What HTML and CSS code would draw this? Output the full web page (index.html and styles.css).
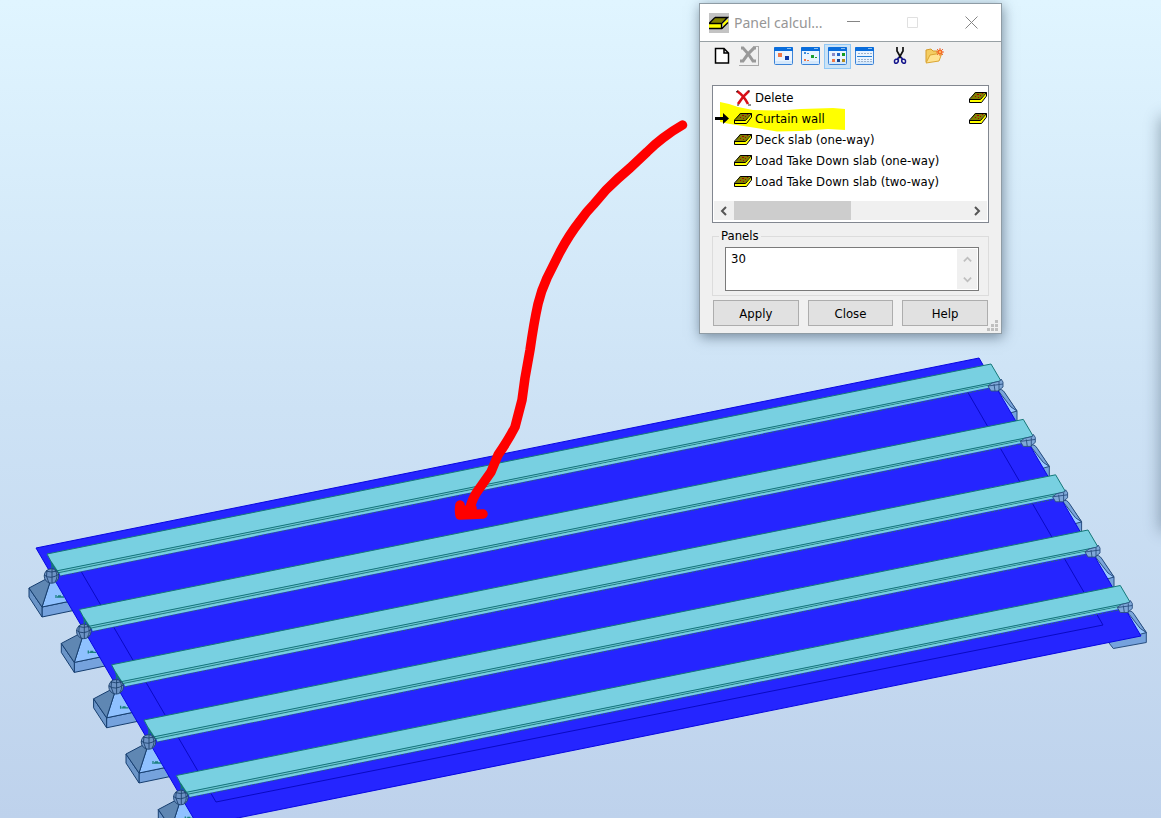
FILE: index.html
```html
<!DOCTYPE html>
<html lang="en">
<head>
<meta charset="utf-8">
<title>Panel calculation model</title>
<link rel="stylesheet" href="styles.css">
</head>
<body>
<main class="viewport">
<svg class="scene" viewBox="0 0 1161 818" preserveAspectRatio="xMidYMid slice" role="img" aria-label="Slab on five beams">
  <defs>
    <g id="support-left" stroke="#173f70" stroke-width="1" stroke-linejoin="round">
      <path fill="#75a2dd" d="M42 607L95 596V606L42 617z"/>
      <path fill="#6b95c8" d="M29 588L42 607V617L29 597z"/>
      <path fill="#8fc1ff" d="M51 579L42 607L95 596L57 579z"/>
      <path fill="#5f87b3" d="M46 579L29 588L42 607L51 579z"/>
      <path fill="none" stroke="#1c8080" stroke-width="1.3" d="M56 595V598M57 597H64M58 596H61"/>
    </g>
    <g id="support-right" stroke="#294f80" stroke-width="1" stroke-linejoin="round">
      <path fill="#75a2dd" d="M977 418L1017 411V421L984 427z"/>
      <path fill="#9bc9ff" d="M994 388L1003 391L1017 411L1000 416z"/>
      <path fill="#7ba5da" d="M998 390Q1002 388 1005 393L1017 411L1011 407L1000 393z"/>
    </g>
    <g id="node-left" stroke="#1d426e" stroke-width=".9">
      <circle cx="51.500" cy="576" r="7.300" fill="#6d93c4"/>
      <path fill="none" d="M44 575Q51 580 59 574M47 570Q45 576 49 583M52 569V583M55 570Q59 576 55 582M46 571Q51 573 57 571"/>
    </g>
    <g id="node-right" stroke="#294f80" stroke-width=".9">
      <path fill="#7fa8d8" d="M988 386L992 383L1000 381L1001 379L1003 382V387L998 391H991z"/>
      <path fill="none" d="M988 386L1003 384M994 384L995 391M999 382L999 391"/>
    </g>
    <g id="beam">
      <path fill="#6fc5d2" d="M56 571L1001 381L1000 384L60 574z"/>
      <path fill="#78d0e1" d="M47 554L991 364L1001 381L56 571z"/>
      <path fill="none" stroke="#157878" stroke-width="1" d="M47 554L991 364L1001 381L56 571z"/>
      <path fill="none" stroke="#1f7d80" stroke-width="1" d="M57 573L1000 383"/>
      <path fill="none" stroke="#285b83" stroke-width="1" stroke-dasharray="3 1" d="M60 576L992 388"/>
      <path fill="none" stroke="#78d0e1" stroke-width="2" d="M60 574.500L992 386"/>
      <path fill="none" stroke="#157878" stroke-width="1.500" d="M52 563V571M51 562L59 574"/>
    </g>
    <linearGradient id="sky" x1="0" y1="0" x2="0" y2="1">
      <stop offset="0" stop-color="#e0f5ff"/>
      <stop offset=".5" stop-color="#cde2f5"/>
      <stop offset="1" stop-color="#bed2ec"/>
    </linearGradient>
  </defs>
  <rect width="1161" height="818" fill="url(#sky)"/>
  <g>
    <use href="#support-left"/><use href="#support-right"/>
    <use href="#support-left" x="32.300" y="55.400"/><use href="#support-right" x="32.300" y="55.400"/>
    <use href="#support-left" x="64.600" y="110.800"/><use href="#support-right" x="64.600" y="110.800"/>
    <use href="#support-left" x="97" y="166"/><use href="#support-right" x="97" y="166"/>
    <use href="#support-left" x="129.300" y="221.500"/><use href="#support-right" x="129.300" y="221.500"/>
  </g>
  <path fill="#2525ff" stroke="#0808df" d="M36 548L979 358L1141 636L198 826z"/>
  <path fill="none" stroke="#0a0ac4" d="M75 561L963 384L1103 625L216 802z"/>
  <g>
    <use href="#beam"/><use href="#node-right"/><use href="#node-left"/>
    <use href="#beam" x="32.300" y="55.400"/><use href="#node-right" x="32.300" y="55.400"/><use href="#node-left" x="32.300" y="55.400"/>
    <use href="#beam" x="64.600" y="110.800"/><use href="#node-right" x="64.600" y="110.800"/><use href="#node-left" x="64.600" y="110.800"/>
    <use href="#beam" x="97" y="166"/><use href="#node-right" x="97" y="166"/><use href="#node-left" x="97" y="166"/>
    <use href="#beam" x="129.300" y="221.500"/><use href="#node-right" x="129.300" y="221.500"/><use href="#node-left" x="129.300" y="221.500"/>
  </g>
  <path fill="none" stroke="red" stroke-width="9.500" stroke-linecap="round" stroke-linejoin="round" d="M682.500 125Q672 131 663 138Q655 144 647 152L630 168Q618 178 606 190L594 204Q587 211 580 221Q569 235 560 252L547 278Q541 291 538 304Q534 322 530 350L525 378L522 400L515 427Q509 439 498 455L491 472L479 489Q472 498 469 512M460 505Q459 509 460 515L483 514M462 512L472 508"/>
</svg>

<div class="edge-shadow"></div>

<svg class="symbols" aria-hidden="true">
  <symbol id="slab" viewBox="0 0 18 13">
    <path fill="#808000" d="M6 1H17L12 8H1z"/>
    <path fill="#ff0" d="M1 8H12V12H1zM12 8L17 1V5L12 12z"/>
    <path fill="none" stroke="#000" d="M6.500 1.500H17.500V5L12.500 11.500H.5V8L6.500 1.500M.5 8.500H11.500L17.500 1.500"/>
    <path stroke="#b00000" d="M8 3.500h2M13 2.500h1M6 5.500h1M11 4.500h1M9 6.500h1"/>
  </symbol>
  <symbol id="view" viewBox="0 0 19 18">
    <rect x=".5" y=".5" width="18" height="17" rx="1" fill="#eaf4ff" stroke="#3b83d8"/>
    <path fill="#0a6ddb" d="M0 1Q0 0 1 0H18Q19 0 19 1V4H0z"/>
    <path stroke="#8fc0ef" d="M13 1.500h4"/>
    <path fill="#c0dcf8" d="M1 14H18V17H1z" opacity=".5"/>
  </symbol>
</svg>

<section class="dialog" aria-label="Panel calculation model">
  <header class="titlebar">
    <svg class="app-icon" viewBox="0 0 20 20"><path fill="#c3c3c3" d="M0 0h20v20H0z"/><path fill="#808000" d="M6 5H18L12 10H1z"/><path fill="#ff0" d="M0 11H12V15H0zM14 10L19 6V9L14 15z"/><path fill="none" stroke="#000" stroke-width="1.300" d="M6 4.500H18.500L12.500 10.500H0L6 4.500M12.500 10.500V15.500H0M13 15.500L19 9.500"/></svg>
    <h1 class="title">Panel calcul...</h1>
    <button class="win-btn" aria-label="Minimize"><svg viewBox="0 0 13 13"><path d="M0 5.500H13"/></svg></button>
    <button class="win-btn faint" aria-label="Maximize" disabled><svg viewBox="0 0 13 13"><path d="M1.500 1.500h10v10h-10z"/></svg></button>
    <button class="win-btn" aria-label="Close window"><svg viewBox="0 0 13 13"><path d="M.5.500L12.500 12.500M12.500.500L.5 12.500"/></svg></button>
  </header>
  <div class="toolbar" role="toolbar" aria-label="View options">
    <button class="tool" aria-label="New"><svg width="16" height="18" viewBox="0 0 16 18"><path fill="#fff" stroke="#000" stroke-width="1.500" d="M1.500 1.500H10L14.500 6V16H1.500zM10 1.500V6H14.500"/></svg></button>
    <button class="tool" aria-label="Delete panel"><svg width="20" height="20" viewBox="0 0 20 20"><path fill="none" stroke="#999" stroke-width="3" d="M2 2H4Q10 8 14 15H17M17 2H15Q8 8 4 15H1"/><path stroke="#aaa" d="M0 19.500H20M19.500 0V20M14 .500H20"/></svg></button>
    <span class="gap"></span>
    <button class="tool" aria-label="Large icons"><svg width="19" height="18"><use href="#view"/><path fill="#f07848" d="M4 6h4v4H4z"/><path fill="#0a38a8" d="M11 9h4v4h-4z"/></svg></button>
    <button class="tool" aria-label="Small icons"><svg width="19" height="18"><use href="#view"/><path fill="#3c8bdc" d="M3 5h2v2H3zM6 6h2v1H6z"/><path fill="#1da030" d="M10 8h3v3h-3zM14 10h2v1h-2z"/><path fill="#f07848" d="M3 12h2v2H3zM6 13h2v1H6z"/></svg></button>
    <button class="tool pressed" aria-label="List" aria-pressed="true"><svg width="19" height="18"><use href="#view"/><path fill="#8a8ac8" d="M4 6h3v3H4z"/><path fill="#1f65c8" d="M9 6h3v3H9z"/><path fill="#129c20" d="M14 6h3v3h-3z"/><path fill="#f07848" d="M4 12h3v3H4z"/><path fill="#16418c" d="M9 12h3v3H9z"/><path fill="#b08b20" d="M14 12h3v3h-3z"/></svg></button>
    <button class="tool" aria-label="Details"><svg width="19" height="18"><use href="#view"/><path stroke="#9eb3cc" stroke-dasharray="2 1" d="M3 6.500H17M3 12.500H17M3 14.500H17"/><path stroke="#2780d5" d="M2 9.500H17"/></svg></button>
    <span class="gap"></span>
    <button class="tool" aria-label="Cut"><svg width="14" height="18" viewBox="0 0 14 18"><path fill="none" stroke="#111" stroke-width="1.700" d="M4 0V4L8 11M10 0V4L6 11"/><path fill="none" stroke="#15158c" stroke-width="1.500" d="M6 10L4.500 12Q1 12 1.500 15Q2 17 4 16Q6 15 5 12M8 10L9.500 12Q13 12 12.500 15Q12 17 10 16Q8 15 9 12"/></svg></button>
    <span class="gap"></span>
    <button class="tool" aria-label="Open"><svg width="20" height="18" viewBox="0 0 20 18"><path fill="#f4cd62" stroke="#d59b29" d="M1 15V3L6 2L8 4H14V7"/><path fill="#ffe391" stroke="#dba532" d="M1 16L5 8L17 6L14 14z"/><path stroke="#ee6a3c" d="M15 1V9M11 5H19M12 2L18 8M18 2L12 8"/><circle cx="15" cy="5" r="2.500" fill="#f46b28"/><circle cx="15" cy="5" r="1" fill="#ffd06a"/></svg></button>
  </div>
  <div class="content">
    <div class="listbox">
      <svg class="marker" viewBox="0 0 132 36" aria-hidden="true"><path fill="#ff0" d="M7 1L16 3L25 6L40 9L67 9.500L88 8L120 7L132 8V29L115 28L87 30L64 30.500L37 26L17 23L12 22L7 21z"/></svg>
      <ul class="rows">
        <li class="row"><svg class="x-icon" viewBox="0 0 16 16"><path fill="none" stroke="#d81018" stroke-width="2.600" d="M2 1Q9 6 13 14M14 1Q8 6 3 14"/><path stroke="#222" d="M1 2L3 1M13 15H16M2 15H4M13 1h2"/></svg><span class="name">Delete</span><svg class="slab"><use href="#slab"/></svg></li>
        <li class="row"><svg class="pointer" viewBox="0 0 14 11"><path d="M0 4H8V0L14 5.500L8 11V7H0z"/></svg><svg class="slab"><use href="#slab"/></svg><span class="name">Curtain wall</span><svg class="slab"><use href="#slab"/></svg></li>
        <li class="row"><svg class="slab"><use href="#slab"/></svg><span class="name">Deck slab (one-way)</span></li>
        <li class="row"><svg class="slab"><use href="#slab"/></svg><span class="name">Load Take Down slab (one-way)</span></li>
        <li class="row"><svg class="slab"><use href="#slab"/></svg><span class="name">Load Take Down slab (two-way)</span></li>
      </ul>
      <div class="scrollbar">
        <button class="scroll-btn" aria-label="Scroll left"><svg viewBox="0 0 10 10"><path d="M7 1L3 5L7 9"/></svg></button>
        <div class="track"><div class="thumb"></div></div>
        <button class="scroll-btn" aria-label="Scroll right"><svg viewBox="0 0 10 10"><path d="M3 1L7 5L3 9"/></svg></button>
      </div>
    </div>
    <fieldset class="panels">
      <legend><label for="panels">Panels</label></legend>
      <div class="field">
        <textarea id="panels" class="panels-input">30</textarea>
        <div class="spin">
          <button aria-label="Scroll up"><svg viewBox="0 0 10 10"><path d="M1 7L5 3L9 7"/></svg></button>
          <button aria-label="Scroll down"><svg viewBox="0 0 10 10"><path d="M1 3L5 7L9 3"/></svg></button>
        </div>
      </div>
    </fieldset>
    <div class="actions">
      <button class="action">Apply</button>
      <button class="action">Close</button>
      <button class="action">Help</button>
    </div>
  </div>
  <svg class="grip" viewBox="0 0 11 11" aria-hidden="true"><path d="M8 0h3v3H8zM4 4h3v3H4zM8 4h3v3H8zM0 8h3v3H0zM4 8h3v3H4zM8 8h3v3H8z"/></svg>
</section>
</main>
</body>
</html>
```
FILE: styles.css
```css
* { box-sizing: border-box; }
body { margin: 0; font-family: "DejaVu Sans Condensed", "DejaVu Sans", sans-serif; font-size: 13px; color: #000; }
button { padding: 0; border: 0; background: none; font: inherit; color: inherit; }
svg { display: block; flex: none; }
.viewport { position: relative; height: 100vh; overflow: hidden; }
.scene { width: 100%; height: 100%; }
.symbols { position: absolute; width: 0; height: 0; }
.edge-shadow { position: absolute; left: 100%; top: 118px; width: 40px; height: 412px; box-shadow: 0 0 16px 1px rgba(40, 60, 80, .4); }

.dialog { position: absolute; left: 699px; top: 3px; width: 303px; background: #f0f0f0; border: 1px solid #8f9ca5; box-shadow: 1px 3px 12px rgba(40, 60, 80, .55); }
.titlebar { display: flex; align-items: center; height: 38px; padding-left: 9px; background: #fff; border-bottom: 1px solid #98a0a4; }
.app-icon { width: 20px; height: 20px; }
.title { flex: 1; margin: 0 0 0 5px; font-family: "Noto Sans", "Open Sans", sans-serif; font-size: 14px; font-weight: 400; line-height: 20px; color: #969696; white-space: nowrap; }
.win-btn { display: flex; align-items: center; justify-content: center; width: 59px; height: 37px; }
.win-btn svg { width: 13px; height: 13px; fill: none; stroke: #858585; }
.faint svg { stroke: #e0e0e0; }

.toolbar { display: flex; align-items: center; height: 28px; padding-left: 8px; }
.tool { display: flex; align-items: center; justify-content: center; width: 27px; height: 25px; }
.pressed { background: #cbe3f6; border: 1px solid #90c8f6; }
.gap { width: 8px; }

.content { padding: 15px 12px 7px; }
.listbox { position: relative; border: 1px solid #828790; background: #fff; padding: 1px 1px 2px; }
.marker { position: absolute; left: 0; top: 15px; width: 132px; height: 36px; }
.rows { position: relative; list-style: none; margin: 0; padding: 0 0 9px; }
.row { display: flex; align-items: center; height: 21px; padding-left: 20px; line-height: 21px; }
.name { flex: 1; margin-left: 3px; white-space: nowrap; }
.slab { width: 18px; height: 13px; }
.x-icon { width: 16px; height: 16px; margin: 0 1px; }
.pointer { width: 14px; height: 11px; margin: 0 5px 0 -19px; }
.scrollbar { display: flex; height: 19px; background: #f0f0f0; }
.scroll-btn { display: flex; align-items: center; justify-content: center; width: 20px; }
.scroll-btn svg { width: 10px; height: 10px; fill: none; stroke: #555; stroke-width: 2; }
.track { flex: 1; }
.thumb { width: 50%; height: 100%; background: #cdcdcd; }

.panels { margin: 4px 0 0; padding: 0 9px 4px 12px; border: 1px solid #dcdcdc; min-width: 0; }
.panels legend { margin-left: -6px; padding: 0 2px; line-height: 18px; }
.field { display: flex; height: 44px; margin-top: 2px; padding: 1px; border: 1px solid #7a7a7a; background: #fff; }
.panels-input { flex: 1; min-width: 0; padding: 1px 4px; border: 0; outline: 0; resize: none; overflow: hidden; background: none; font: inherit; line-height: 18px; }
.spin { display: flex; flex-direction: column; width: 20px; background: #f0f0f0; }
.spin button { flex: 1; display: flex; align-items: center; justify-content: center; }
.spin svg { width: 9px; height: 9px; fill: none; stroke: #bfbfbf; stroke-width: 2; }

.actions { display: grid; grid-template-columns: repeat(3, 1fr); gap: 9px; margin-top: 4px; padding: 0 1px; }
.action { height: 26px; background: #e1e1e1; border: 1px solid #adadad; }
.grip { position: absolute; right: 3px; bottom: 2px; width: 11px; height: 11px; fill: #bfbfbf; }
```
